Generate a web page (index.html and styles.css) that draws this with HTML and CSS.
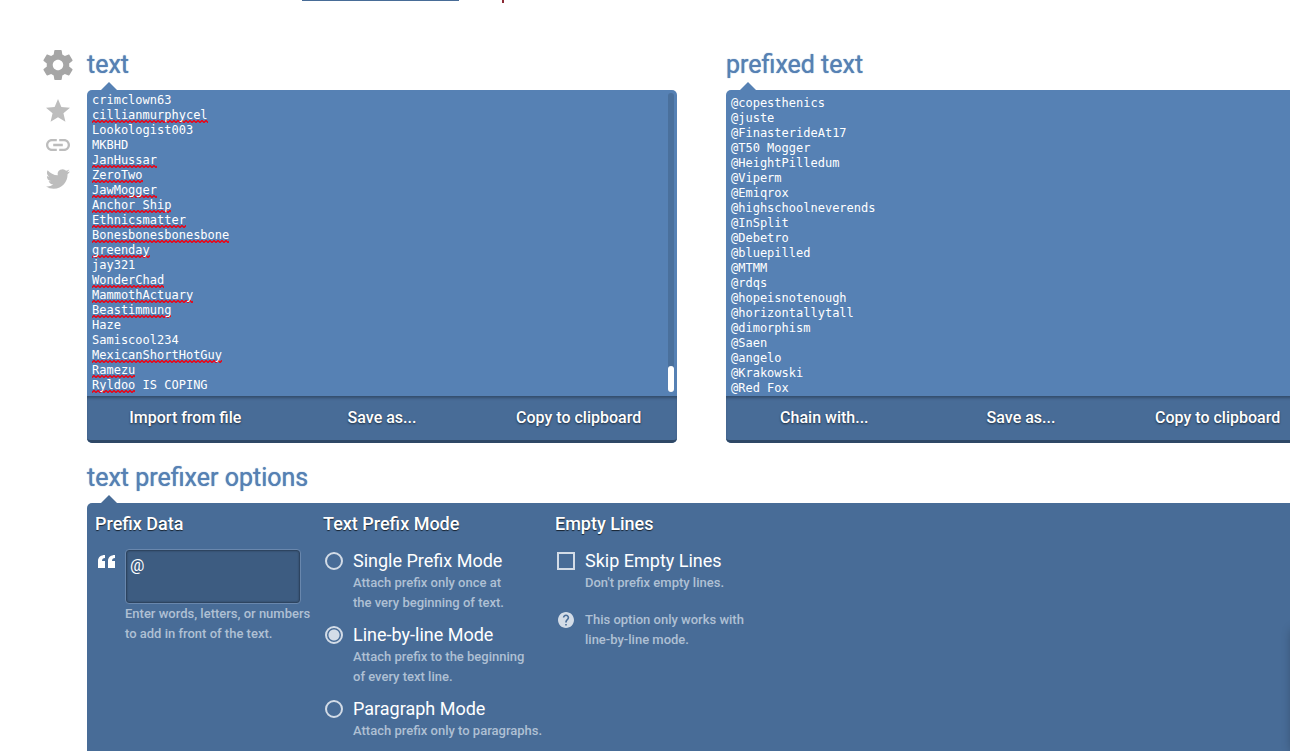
FILE: index.html
```
<!DOCTYPE html>
<html lang="en">
<head>
  <meta charset="UTF-8">
  <meta name="viewport" content="width=device-width, initial-scale=1.0">
  <title>Text Prefixer</title>
  <link rel="stylesheet" href="styles.css">
</head>
<body>
  <header class="topbar">
    <span class="topbar-tab"></span>
    <span class="topbar-mark"></span>
  </header>

  <div class="page">
    <nav class="rail" aria-label="Tool actions">
      <button class="rail-button rail-settings" aria-label="Settings">
        <svg viewBox="2 2 20 20" width="30" height="30"><path d="M19.43 12.98c.04-.32.07-.64.07-.98s-.03-.66-.07-.98l2.11-1.65c.19-.15.24-.42.12-.64l-2-3.46c-.12-.22-.39-.3-.61-.22l-2.49 1c-.52-.4-1.08-.73-1.69-.98l-.38-2.65C14.46 2.18 14.25 2 14 2h-4c-.25 0-.46.18-.49.42l-.38 2.65c-.61.25-1.17.59-1.69.98l-2.49-1c-.23-.09-.49 0-.61.22l-2 3.46c-.13.22-.07.49.12.64l2.11 1.65c-.04.32-.07.65-.07.98s.03.66.07.98l-2.11 1.65c-.19.15-.24.42-.12.64l2 3.46c.12.22.39.3.61.22l2.49-1c.52.4 1.08.73 1.69.98l.38 2.65c.03.24.24.42.49.42h4c.25 0 .46-.18.49-.42l.38-2.65c.61-.25 1.17-.59 1.69-.98l2.49 1c.23.09.49 0 .61-.22l2-3.46c.12-.22.07-.49-.12-.64l-2.11-1.65zM12 15.5c-1.93 0-3.5-1.57-3.5-3.5s1.57-3.5 3.5-3.5 3.5 1.57 3.5 3.5-1.57 3.5-3.5 3.5z"/></svg>
      </button>
      <button class="rail-button" aria-label="Add to favorites">
        <svg viewBox="2 2 20 20" width="24" height="24"><path d="M12 17.27L18.18 21l-1.64-7.03L22 9.24l-7.19-.61L12 2 9.19 8.63 2 9.24l5.46 4.73L5.82 21z"/></svg>
      </button>
      <button class="rail-button" aria-label="Copy link">
        <svg viewBox="2 2 20 20" width="24" height="24"><path d="M3.9 12c0-1.71 1.39-3.1 3.1-3.1h4V7H7c-2.76 0-5 2.24-5 5s2.24 5 5 5h4v-1.9H7c-1.71 0-3.1-1.39-3.1-3.1zM8 13h8v-2H8v2zm9-6h-4v1.9h4c1.71 0 3.1 1.39 3.1 3.1s-1.39 3.1-3.1 3.1h-4V17h4c2.76 0 5-2.24 5-5s-2.24-5-5-5z"/></svg>
      </button>
      <button class="rail-button" aria-label="Share on Twitter">
        <svg viewBox="0 0 24 24" width="24" height="24"><path d="M23.95 4.57a10 10 0 0 1-2.82.77 4.96 4.96 0 0 0 2.16-2.72c-.95.55-2 .96-3.13 1.18a4.92 4.92 0 0 0-8.38 4.48C7.69 8.1 4.07 6.13 1.64 3.16a4.9 4.9 0 0 0-.67 2.48c0 1.71.87 3.21 2.19 4.1a4.9 4.9 0 0 1-2.23-.62v.06a4.92 4.92 0 0 0 3.95 4.83 5 5 0 0 1-2.21.08 4.94 4.94 0 0 0 4.6 3.42A9.87 9.87 0 0 1 0 19.54a14 14 0 0 0 7.55 2.21c9.05 0 14-7.5 14-13.98 0-.21 0-.42-.02-.63a9.94 9.94 0 0 0 2.46-2.55z"/></svg>
      </button>
    </nav>

    <main class="tool">
      <div class="editors">
        <section class="block">
          <h2><label for="source">text</label></h2>
          <div class="panel">
            <div class="editor">
              <div class="spelling" id="spelling" aria-hidden="true"></div>
              <textarea id="source" class="source" rows="20" spellcheck="false">crimclown63
cillianmurphycel
Lookologist003
MKBHD
JanHussar
ZeroTwo
JawMogger
Anchor Ship
Ethnicsmatter
Bonesbonesbonesbone
greenday
jay321
WonderChad
MammothActuary
Beastimmung
Haze
Samiscool234
MexicanShortHotGuy
Ramezu
Ryldoo IS COPING</textarea>
              <div class="scroll-track"><div class="scroll-thumb"></div></div>
            </div>
            <div class="actions">
              <button>Import from file</button>
              <button>Save as...</button>
              <button>Copy to clipboard</button>
            </div>
          </div>
        </section>

        <section class="block">
          <h2><label for="result">prefixed text</label></h2>
          <div class="panel">
            <div class="editor">
              <textarea id="result" class="result" rows="20" spellcheck="false" readonly>@copesthenics
@juste
@FinasterideAt17
@T50 Mogger
@HeightPilledum
@Viperm
@Emiqrox
@highschoolneverends
@InSplit
@Debetro
@bluepilled
@MTMM
@rdqs
@hopeisnotenough
@horizontallytall
@dimorphism
@Saen
@angelo
@Krakowski
@Red Fox</textarea>
            </div>
            <div class="actions">
              <button>Chain with...</button>
              <button>Save as...</button>
              <button>Copy to clipboard</button>
            </div>
          </div>
        </section>
      </div>

      <section class="block block-options">
        <h2>text prefixer options</h2>
        <div class="panel options">
          <div class="group">
            <h3><label for="prefix">Prefix Data</label></h3>
            <div class="option">
              <svg class="quote" viewBox="0 0 17 13" width="17" height="13"><path d="M7 0v3C5 3 4 4 4 6h3v7H0V6C0 2 3 0 7 0zM17 0v3c-2 0-3 1-3 3h3v7h-7V6c0-4 3-6 7-6z"/></svg>
              <div>
                <textarea id="prefix" class="prefix" spellcheck="false">@</textarea>
                <p>Enter words, letters, or numbers<br>to add in front of the text.</p>
              </div>
            </div>
          </div>

          <div class="group" role="radiogroup" aria-label="Text Prefix Mode">
            <h3>Text Prefix Mode</h3>
            <div class="option">
              <input type="radio" name="mode" id="mode-single">
              <div>
                <label for="mode-single">Single Prefix Mode</label>
                <p>Attach prefix only once at<br>the very beginning of text.</p>
              </div>
            </div>
            <div class="option">
              <input type="radio" name="mode" id="mode-line" checked>
              <div>
                <label for="mode-line">Line-by-line Mode</label>
                <p>Attach prefix to the beginning<br>of every text line.</p>
              </div>
            </div>
            <div class="option">
              <input type="radio" name="mode" id="mode-paragraph">
              <div>
                <label for="mode-paragraph">Paragraph Mode</label>
                <p>Attach prefix only to paragraphs.</p>
              </div>
            </div>
          </div>

          <div class="group">
            <h3>Empty Lines</h3>
            <div class="option">
              <input type="checkbox" id="skip-empty">
              <div>
                <label for="skip-empty">Skip Empty Lines</label>
                <p>Don't prefix empty lines.</p>
              </div>
            </div>
            <div class="option hint">
              <svg viewBox="2 2 20 20" width="16" height="16"><path d="M12 2C6.48 2 2 6.48 2 12s4.48 10 10 10 10-4.48 10-10S17.52 2 12 2zm1 17h-2v-2h2v2zm2.07-7.75l-.9.92C13.45 12.9 13 13.5 13 15h-2v-.5c0-1.1.45-2.1 1.17-2.83l1.24-1.26c.37-.36.59-.86.59-1.41 0-1.1-.9-2-2-2s-2 .9-2 2H8c0-2.21 1.79-4 4-4s4 1.79 4 4c0 .88-.36 1.68-.93 2.25z"/></svg>
              <p>This option only works with<br>line-by-line mode.</p>
            </div>
          </div>
        </div>
      </section>
    </main>
  </div>

  <div class="side-drawer"></div>

  <script src="script.js"></script>
</body>
</html>
```
FILE: styles.css
```
* {
  box-sizing: border-box;
}

body {
  margin: 0;
  min-height: 100vh;
  display: flex;
  flex-direction: column;
  overflow-x: hidden;
  background-color: #fff;
  color: #fff;
  font-family: Roboto, "Liberation Sans", sans-serif;
}

h2, h3, p {
  margin: 0;
}

button {
  padding: 0;
  border: none;
  background: none;
  color: inherit;
  font-family: inherit;
  cursor: pointer;
}

svg {
  display: block;
  fill: currentColor;
}

/* Tail of the site header */
.topbar {
  display: flex;
  gap: 43px;
  height: 46px;
  padding-left: 302px;
}

.topbar-tab {
  width: 157px;
  height: 1px;
  background-color: #486c97;
}

.topbar-mark {
  width: 2px;
  height: 3px;
  background-color: #8b2a35;
}

.page {
  flex: 1;
  display: flex;
  gap: 15px;
  padding-left: 44px;
}

/* Icon rail */
.rail {
  width: 28px;
  padding-top: 4px;
  display: flex;
  flex-direction: column;
  align-items: center;
  gap: 10px;
}

.rail-button {
  color: #bdbdbd;
}

.rail-settings {
  margin-bottom: 9px;
  color: #a6a6a6;
}

.tool {
  flex: 1;
  display: flex;
  flex-direction: column;
}

.editors {
  display: grid;
  grid-template-columns: repeat(2, minmax(590px, 1fr));
  gap: 49px;
}

h2 {
  height: 44px;
  color: #5681b4;
  font-size: 25px;
  font-weight: 400;
  line-height: 37px;
  text-shadow: 0 0 1px #5681b4;
}

.panel {
  position: relative;
  border-radius: 5px;
  background-color: #5681b4;
}

/* Notch under the heading */
.panel::before {
  content: "";
  position: absolute;
  left: 14px;
  top: -8px;
  border: 8px solid transparent;
  border-top: none;
  border-bottom-color: #5681b4;
}

.editor {
  position: relative;
  height: 306px;
}

textarea {
  display: block;
  border: none;
  outline: none;
  resize: none;
  color: #fff;
}

/* Positioned so that the letters lie over the spell check underlines */
.editor textarea {
  position: relative;
  width: 100%;
  height: 100%;
  padding: 6px 5px 0;
  overflow: hidden;
  background: none;
  font-family: "DejaVu Sans Mono", monospace;
  font-size: 12px;
  line-height: 15px;
}

.editor .source {
  padding-top: 3px;
}

/* Spell check underlines, one row for each line of text */
.spelling {
  position: absolute;
  left: 5px;
  top: 3px;
  font-family: "DejaVu Sans Mono", monospace;
  font-size: 12px;
  pointer-events: none;
}

.spelling-row {
  height: 15px;
  display: flex;
  align-items: flex-end;
}

.spelling-mark {
  height: 3px;
  background: url("data:image/svg+xml,%3Csvg xmlns='http://www.w3.org/2000/svg' width='4' height='3'%3E%3Cpath d='M-1 1.5L0 2.5L2 .5L4 2.5L5 1.5' fill='none' stroke='%23f00010' stroke-width='1.4'/%3E%3C/svg%3E") repeat-x;
}

.scroll-track {
  position: absolute;
  top: 3px;
  right: 3px;
  bottom: 4px;
  width: 6px;
  display: flex;
  align-items: flex-end;
  border-radius: 3px;
  background-color: #4a709c;
}

.scroll-thumb {
  width: 6px;
  height: 26px;
  border-radius: 3px;
  background-color: #fff;
}

.actions {
  display: grid;
  grid-template-columns: repeat(3, 1fr);
  height: 47px;
  border-bottom: 3px solid #2f4866;
  border-radius: 0 0 5px 5px;
  background-color: #486c97;
  box-shadow: inset 0 3px 3px -1px rgba(0, 0, 0, 0.3);
}

.actions button {
  padding-bottom: 2px;
  font-size: 16px;
  font-weight: 500;
  text-shadow: 0 1px 2px rgba(0, 0, 0, 0.6);
}

/* Options */
.block-options {
  flex: 1;
  display: flex;
  flex-direction: column;
  min-width: 1229px;
  padding-top: 16px;
}

.options {
  flex: 1;
  display: grid;
  grid-template-columns: 228px 232px 1fr;
  padding: 8px 8px 0;
  border-radius: 5px 5px 0 0;
  background-color: #486c97;
}

.options::before {
  border-bottom-color: #486c97;
}

h3 {
  margin-bottom: 12px;
  font-size: 18px;
  font-weight: 500;
  line-height: 26px;
  text-shadow: 0 1px 1px rgba(0, 0, 0, 0.7);
}

.option {
  display: flex;
  align-items: flex-start;
  gap: 10px;
  margin-bottom: 10px;
}

.option label {
  display: block;
  font-size: 18px;
  line-height: 24px;
}

.option p {
  color: #afc0d4;
  font-size: 13px;
  font-weight: 500;
  line-height: 20px;
  white-space: nowrap;
}

.option input {
  appearance: none;
  flex: none;
  width: 18px;
  height: 18px;
  margin: 3px 0 0 2px;
  border: 2px solid #d3dce7;
}

.option input[type="radio"] {
  border-radius: 50%;
}

.option input[type="radio"]:checked {
  background: radial-gradient(circle, #d3dce7 5px, transparent 6px);
}

.option input[type="checkbox"]:checked {
  background-color: #d3dce7;
}

.quote {
  flex: none;
  margin: 6px 0 0 3px;
}

.prefix {
  width: 176px;
  height: 55px;
  padding: 4px;
  border: 1px solid #6987ad;
  border-radius: 4px;
  background-color: #3d5c81;
  box-shadow: inset 0 0 2px 1px rgba(0, 0, 0, 0.35);
  font-family: inherit;
  font-size: 16px;
  line-height: 24px;
}

.hint {
  padding: 7px 0 0 3px;
  gap: 11px;
}

.hint svg {
  flex: none;
  margin-top: 2px;
  color: #d3dce7;
}

/* Closed drawer, only its shadow reaches into the window */
.side-drawer {
  position: fixed;
  top: 630px;
  bottom: 0;
  right: -40px;
  width: 38px;
  box-shadow: 0 0 10px rgba(0, 0, 0, 0.3);
}
```
FILE: script.js
```
// Known words, and words that hold digits, are not marked
const knownWords = ['MKBHD', 'Haze', 'IS', 'COPING'];

function isMisspelled(word) {
  return !/\d/.test(word) && !knownWords.includes(word);
}

function markSpelling() {
  const layer = document.getElementById('spelling');
  const lines = document.getElementById('source').value.split('\n');
  layer.textContent = '';

  lines.forEach(line => {
    const row = document.createElement('div');
    row.className = 'spelling-row';

    const words = line === 'Anchor Ship' ? [line] : line.split(' ');
    if (isMisspelled(words[0])) {
      const mark = document.createElement('span');
      mark.className = 'spelling-mark';
      mark.style.width = words[0].length + 'ch';
      row.appendChild(mark);
    }
    layer.appendChild(row);
  });
}

document.getElementById('source').addEventListener('input', markSpelling);
markSpelling();
```
